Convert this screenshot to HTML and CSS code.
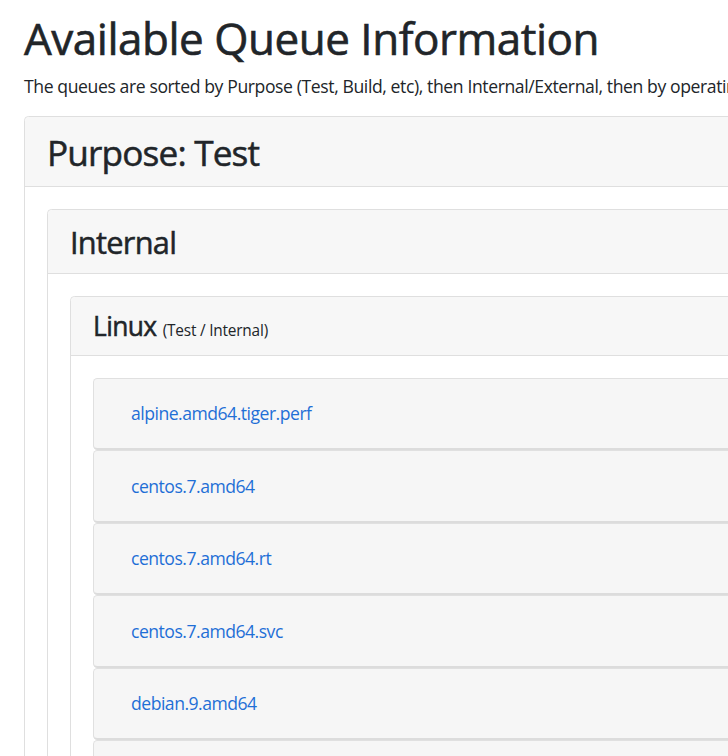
FILE: index.html
```html
<!DOCTYPE html>
<html lang="en">
<head>
<meta charset="utf-8">
<title>Available Queue Information</title>
<link rel="stylesheet" href="styles.css">
</head>
<body>
<main class="page">
  <h1 class="title">Available Queue Information</h1>
  <p class="lead">The queues are sorted by Purpose (Test, Build, etc), then Internal/External, then by operating system, and then alphabetically by queue name.</p>

  <section class="card">
    <div class="card-header"><h2 class="h-purpose">Purpose: Test</h2></div>
    <div class="card-body">
      <section class="card">
        <div class="card-header"><h3 class="h-scope">Internal</h3></div>
        <div class="card-body">
          <section class="card">
            <div class="card-header"><h4 class="h-os">Linux <small class="sub">(Test / Internal)</small></h4></div>
            <div class="card-body">
              <div class="queue"><a href="#">alpine.amd64.tiger.perf</a></div>
              <div class="queue"><a href="#">centos.7.amd64</a></div>
              <div class="queue"><a href="#">centos.7.amd64.rt</a></div>
              <div class="queue"><a href="#">centos.7.amd64.svc</a></div>
              <div class="queue"><a href="#">debian.9.amd64</a></div>
              <div class="queue"><a href="#">debian.9.amd64.open</a></div>
              <div class="queue"><a href="#">fedora.28.amd64</a></div>
            </div>
          </section>
        </div>
      </section>
    </div>
  </section>
</main>
</body>
</html>
```

FILE: styles.css
```css
html, body {
  margin: 0;
  padding: 0;
  overflow: hidden;
  background: #fff;
}
body {
  font-family: "Open Sans", "Noto Sans", sans-serif;
  color: #212529;
  font-size: 17.6px;
  line-height: 1.5;
}
.page {
  width: 1300px;
  padding: 11.5px 24px 0 24px;
}
.title {
  font-size: 44px;
  font-weight: 400;
  -webkit-text-stroke: 0.6px #212529;
  letter-spacing: -0.011em;
  line-height: 1.2;
  margin: 0 0 8.8px 0;
}
.lead {
  margin: 0 0 16.5px 0;
  font-size: 17.6px;
  letter-spacing: -0.4px;
  white-space: nowrap;
}
.card {
  border: 1px solid #dfdfdf;
  border-radius: 4.4px;
  background: #fff;
}
.card-header {
  background: #f7f7f7;
  padding: 13.2px 22px;
  border-bottom: 1px solid #dfdfdf;
  border-radius: 4.4px 4.4px 0 0;
}
.card-body {
  padding: 22px;
}
.h-purpose, .h-scope, .h-os {
  margin: 0;
  font-weight: 400;
  -webkit-text-stroke: 0.5px #212529;
  letter-spacing: -0.024em;
  line-height: 1.2;
}
.h-purpose { font-size: 35.2px; padding-top: 1px; margin-bottom: -1px; }
.h-scope { font-size: 30.8px; padding-top: 1px; margin-bottom: -1px; }
.h-os { font-size: 26.4px; padding-top: 1px; margin-bottom: -1px; }
.sub {
  font-size: 15.4px;
  font-weight: 400;
  letter-spacing: -0.2px;
  -webkit-text-stroke: 0;
}
.queue {
  background: #f6f6f6;
  border: 1px solid #e0e0e0;
  border-bottom: 2px solid #dcdcdc;
  border-radius: 4.4px;
  padding: 21.5px 37px;
  line-height: 26.4px;
}
.queue a {
  color: #1f6fd6;
  text-decoration: none;
  letter-spacing: -0.5px;
}
```
